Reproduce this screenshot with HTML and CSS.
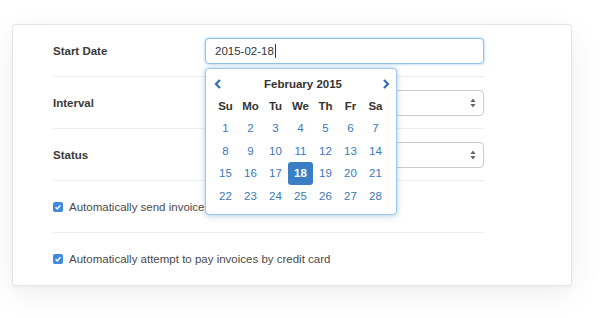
FILE: index.html
```html
<!DOCTYPE html>
<html>
<head>
<meta charset="utf-8">
<link rel="stylesheet" href="styles.css">
</head>
<body>
<div class="card">
  <div class="form">
    <div class="row">
      <div class="label">Start Date</div>
      <div class="field">
        <div class="input focus">2015-02-18<span class="caret"></span></div>
        <div class="picker">
          <div class="head">
            <span class="nav"><svg width="8" height="10" viewBox="0 0 8 10"><path d="M6 1 L2 5 L6 9" fill="none" stroke="#2f6fb0" stroke-width="2.2"/></svg></span>
            <span class="month">February 2015</span>
            <span class="nav"><svg width="8" height="10" viewBox="0 0 8 10"><path d="M2 1 L6 5 L2 9" fill="none" stroke="#2f6fb0" stroke-width="2.2"/></svg></span>
          </div>
          <div class="grid">
            <span class="dow">Su</span><span class="dow">Mo</span><span class="dow">Tu</span><span class="dow">We</span><span class="dow">Th</span><span class="dow">Fr</span><span class="dow">Sa</span>
            <span class="d">1</span><span class="d">2</span><span class="d">3</span><span class="d">4</span><span class="d">5</span><span class="d">6</span><span class="d">7</span>
            <span class="d">8</span><span class="d">9</span><span class="d">10</span><span class="d">11</span><span class="d">12</span><span class="d">13</span><span class="d">14</span>
            <span class="d">15</span><span class="d">16</span><span class="d">17</span><span class="d sel">18</span><span class="d">19</span><span class="d">20</span><span class="d">21</span>
            <span class="d">22</span><span class="d">23</span><span class="d">24</span><span class="d">25</span><span class="d">26</span><span class="d">27</span><span class="d">28</span>
          </div>
        </div>
      </div>
    </div>
    <div class="row">
      <div class="label">Interval</div>
      <div class="field"><div class="input select"><span class="arrows"><svg width="6" height="10" viewBox="0 0 6 10"><path d="M3 0.5 L5.6 4 L0.4 4 Z M3 9.5 L5.6 6 L0.4 6 Z" fill="#666"/></svg></span></div></div>
    </div>
    <div class="row">
      <div class="label">Status</div>
      <div class="field"><div class="input select"><span class="arrows"><svg width="6" height="10" viewBox="0 0 6 10"><path d="M3 0.5 L5.6 4 L0.4 4 Z M3 9.5 L5.6 6 L0.4 6 Z" fill="#666"/></svg></span></div></div>
    </div>
    <div class="row check">
      <span class="box"><svg width="10" height="10" viewBox="0 0 10 10"><path d="M2.6 5.2 L4.3 6.9 L7.4 3.2" fill="none" stroke="#fff" stroke-width="1.4"/></svg></span>
      <span class="text">Automatically send invoices</span>
    </div>
    <div class="row check last">
      <span class="box"><svg width="10" height="10" viewBox="0 0 10 10"><path d="M2.6 5.2 L4.3 6.9 L7.4 3.2" fill="none" stroke="#fff" stroke-width="1.4"/></svg></span>
      <span class="text">Automatically attempt to pay invoices by credit card</span>
    </div>
  </div>
</div>
</body>
</html>
```
FILE: styles.css
```css
html, body {
  margin: 0;
  padding: 0;
  background: #ffffff;
}
body {
  width: 600px;
  height: 318px;
  overflow: hidden;
  font-family: "Liberation Sans", Arial, sans-serif;
  font-size: 11.5px;
  color: #333;
}
.card {
  margin: 24px 0 0 12px;
  width: 558px;
  height: 260px;
  background: #fff;
  border: 1px solid #e6e6e6;
  border-radius: 3px;
  box-shadow: 0 8px 30px rgba(0,0,0,0.07), 0 1px 3px rgba(0,0,0,0.04);
}
.form {
  margin-left: 40px;
  width: 431px;
}
.row {
  height: 51px;
  display: flex;
  align-items: center;
  border-top: 1px solid #eeeeee;
}
.row:first-child {
  border-top-color: #e8e8e8;
  margin-top: -1px;
}
.label {
  width: 152px;
  font-weight: bold;
  color: #3a3a3a;
}
.field {
  position: relative;
  width: 279px;
}
.input {
  box-sizing: border-box;
  height: 26px;
  border: 1px solid #cccccc;
  border-radius: 4px;
  background: #fff;
  display: flex;
  align-items: center;
  padding-left: 9px;
  color: #333;
}
.input.focus {
  border-color: #8fc3ee;
  box-shadow: 0 0 3px rgba(102,175,233,0.7);
}
.caret {
  display: inline-block;
  width: 1px;
  height: 14px;
  background: #333;
  margin-left: 1px;
}
.select {
  justify-content: flex-end;
  padding-right: 7px;
}
.arrows {
  display: flex;
}
.picker {
  position: absolute;
  left: 0;
  top: 30px;
  box-sizing: border-box;
  width: 192px;
  height: 147px;
  border: 1px solid #9cc8ee;
  border-radius: 4px;
  background: #fff;
  box-shadow: 0 0 4px rgba(102,175,233,0.5), 0 3px 8px rgba(0,0,0,0.08);
  padding: 4px 0 0 7px;
  z-index: 2;
}
.head {
  width: 180px;
  margin-left: -1px;
  height: 22px;
  display: flex;
  align-items: center;
  justify-content: space-between;
}
.nav {
  width: 12px;
  display: flex;
  justify-content: center;
}
.month {
  font-weight: bold;
  color: #333;
  margin-left: 2px;
}
.grid {
  display: grid;
  grid-template-columns: repeat(7, 25px);
  grid-auto-rows: 22.5px;
}
.grid span {
  display: flex;
  align-items: center;
  justify-content: center;
}
.dow {
  font-weight: bold;
  color: #333;
  height: 22px;
}
.d {
  color: #3b78b8;
}
.d.sel {
  background: #3a7fc4;
  color: #fff;
  font-weight: bold;
  border-radius: 3px;
}
.check {
  gap: 6px;
}
.box {
  width: 10px;
  height: 10px;
  border-radius: 2px;
  background: #3f8ae0;
  display: flex;
}
.text {
  color: #4a4a4a;
}
```
